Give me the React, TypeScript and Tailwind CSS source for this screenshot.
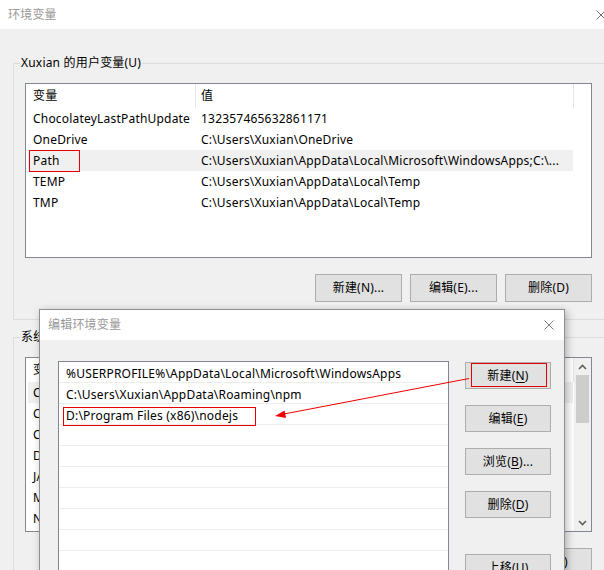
import React from "react";

const userRows = [
  ["ChocolateyLastPathUpdate", "132357465632861171"],
  ["OneDrive", "C:\\Users\\Xuxian\\OneDrive"],
  ["Path", "C:\\Users\\Xuxian\\AppData\\Local\\Microsoft\\WindowsApps;C:\\..."],
  ["TEMP", "C:\\Users\\Xuxian\\AppData\\Local\\Temp"],
  ["TMP", "C:\\Users\\Xuxian\\AppData\\Local\\Temp"],
];

const sysRows = [
  ["ChocolateyInstall", "C:\\ProgramData\\chocolatey"],
  ["ComSpec", "C:\\Windows\\system32\\cmd.exe"],
  ["CLASSPATH", ".;%JAVA_HOME%\\lib"],
  ["DriverData", "C:\\Windows\\System32\\Drivers\\DriverData"],
  ["JAVA_HOME", "C:\\Program Files\\Java\\jdk1.8.0"],
  ["MAVEN_HOME", "D:\\apache-maven"],
  ["NUMBER_OF_PROCESSORS", "8"],
];

const pathRows = [
  "%USERPROFILE%\\AppData\\Local\\Microsoft\\WindowsApps",
  "C:\\Users\\Xuxian\\AppData\\Roaming\\npm",
  "D:\\Program Files (x86)\\nodejs",
  "", "", "", "", "", "", "", "", "", "",
];

function CloseX({ color }: { color: string }) {
  return (
    <svg width="10" height="10" viewBox="0 0 10 10" className="shrink-0">
      <path d="M0.5 0.5 L9.5 9.5 M9.5 0.5 L0.5 9.5" stroke={color} strokeWidth="1" fill="none" />
    </svg>
  );
}

function Btn({ children, className = "" }: { children: React.ReactNode; className?: string }) {
  return (
    <div
      className={
        "flex items-center justify-center border border-[#adadad] bg-[#e1e1e1] whitespace-nowrap " +
        className
      }
    >
      {children}
    </div>
  );
}

function Header() {
  return (
    <div className="flex h-[24px] shrink-0">
      <div className="flex w-[169px] items-center pl-[7px]">变量</div>
      <div className="h-full w-px bg-[#e5e5e5]" />
      <div className="flex w-[377px] items-center pl-[5px]">值</div>
      <div className="h-full w-px bg-[#e5e5e5]" />
    </div>
  );
}

function Row({ name, value, selected }: { name: string; value: string; selected?: boolean }) {
  return (
    <div
      className={
        "ml-[2px] flex h-[21px] w-[545px] shrink-0 items-center whitespace-nowrap " +
        (selected ? "bg-[#f0f0f0]" : "")
      }
    >
      <div className="w-[168px] overflow-hidden pl-[5px]">{name}</div>
      <div className="flex-1 overflow-hidden pl-[5px]">{value}</div>
    </div>
  );
}

function Chevron({ up }: { up?: boolean }) {
  return (
    <svg width="9" height="6" viewBox="0 0 9 6">
      <path
        d={up ? "M1 5 L4.5 1.5 L8 5" : "M1 1 L4.5 4.5 L8 1"}
        stroke="#606060"
        strokeWidth="1.6"
        fill="none"
      />
    </svg>
  );
}

function MainWindow() {
  return (
    <div className="flex w-[620px] flex-col">
      <div className="flex h-[29px] items-center justify-between bg-white pl-[8px] pr-[14px] text-[#999]">
        <span>环境变量</span>
        <CloseX color="#777" />
      </div>

      {/* user variables */}
      <div className="ml-[13px] mt-[34px] w-[594px] border border-[#dcdcdc] pb-[17px] pl-[11px]">
        <div className="-ml-[5px] -mt-[9px] w-fit bg-[#f0f0f0] px-[1px] leading-[16px]">
          Xuxian 的用户变量(U)
        </div>
        <div className="mt-[12px] flex h-[175px] w-[567px] flex-col border border-[#828790] bg-white">
          <Header />
          {userRows.map((r, i) => (
            <Row key={i} name={r[0]} value={r[1]} selected={i === 2} />
          ))}
        </div>
        <div className="mt-[16px] flex w-[567px] justify-end gap-[8px]">
          <Btn className="h-[28px] w-[87px]">新建(N)...</Btn>
          <Btn className="h-[28px] w-[87px]">编辑(E)...</Btn>
          <Btn className="h-[28px] w-[87px]">删除(D)</Btn>
        </div>
      </div>

      {/* system variables */}
      <div className="ml-[13px] mt-[17px] w-[594px] border border-[#dcdcdc] pb-[17px] pl-[11px]">
        <div className="-ml-[5px] -mt-[9px] w-fit bg-[#f0f0f0] px-[1px] leading-[16px]">
          系统变量(S)
        </div>
        <div className="mt-[12px] flex h-[175px] w-[567px] border border-[#828790] bg-white">
          <div className="flex flex-1 flex-col overflow-hidden">
            <Header />
            {sysRows.map((r, i) => (
              <Row key={i} name={r[0]} value={r[1]} selected={i === 0} />
            ))}
          </div>
          <div className="flex w-[17px] flex-col bg-[#f0f0f0]">
            <div className="flex h-[17px] items-center justify-center">
              <Chevron up />
            </div>
            <div className="flex-1">
              <div className="mx-[2px] h-[48px] bg-[#cdcdcd]" />
            </div>
            <div className="flex h-[17px] items-center justify-center">
              <Chevron />
            </div>
          </div>
        </div>
        <div className="mt-[16px] flex w-[567px] justify-end gap-[8px]">
          <Btn className="h-[28px] w-[87px]">新建(W)...</Btn>
          <Btn className="h-[28px] w-[87px]">编辑(I)...</Btn>
          <Btn className="h-[28px] w-[87px]">删除(L)</Btn>
        </div>
      </div>
    </div>
  );
}

function EditDialog() {
  return (
    <div className="absolute left-[39px] top-[309px] flex h-[290px] w-[526px] flex-col border border-[#8f8f8f] bg-[#f0f0f0] shadow-[2px_2px_8px_rgba(0,0,0,0.28)]">
      <div className="flex h-[30px] shrink-0 items-center justify-between bg-white pl-[8px] pr-[10px] text-[#999]">
        <span>编辑环境变量</span>
        <CloseX color="#808080" />
      </div>
      <div className="flex gap-[16px] pl-[18px] pt-[21px]">
        <div className="flex h-[260px] w-[391px] flex-col overflow-hidden border border-[#828790] bg-white">
          {pathRows.map((p, i) => (
            <div
              key={i}
              className="flex h-[21px] shrink-0 items-start whitespace-nowrap border-b border-[#ededed] pl-[7px] pt-[4px]"
            >
              {p}
            </div>
          ))}
        </div>
        <div className="flex flex-col pt-[1px]">
          <Btn className="h-[27px] w-[86px]">
            新建(<span className="underline underline-offset-2">N</span>)
          </Btn>
          <Btn className="mt-[16px] h-[27px] w-[86px]">
            编辑(<span className="underline underline-offset-2">E</span>)
          </Btn>
          <Btn className="mt-[16px] h-[27px] w-[86px]">
            浏览(<span className="underline underline-offset-2">B</span>)...
          </Btn>
          <Btn className="mt-[16px] h-[27px] w-[86px]">
            删除(<span className="underline underline-offset-2">D</span>)
          </Btn>
          <Btn className="mt-[36px] h-[27px] w-[86px]">
            上移(<span className="underline underline-offset-2">U</span>)
          </Btn>
        </div>
      </div>
    </div>
  );
}

function Annotations() {
  return (
    <>
      <div className="pointer-events-none absolute left-[29px] top-[150px] h-[22px] w-[51px] border border-[#e60000]" />
      <div className="pointer-events-none absolute left-[63px] top-[407px] h-[19px] w-[193px] border border-[#e60000]" />
      <div className="pointer-events-none absolute left-[471px] top-[363px] h-[24px] w-[76px] border border-[#e60000]" />
      <svg
        className="pointer-events-none absolute left-0 top-0"
        width="604"
        height="570"
        viewBox="0 0 604 570"
      >
        <line x1="469" y1="378.5" x2="284" y2="414" stroke="#f00000" strokeWidth="1" />
        <polygon points="275,416 286,418 284.6,410.5" fill="#f00000" />
      </svg>
    </>
  );
}

export default function App() {
  return (
    <div className="relative h-[570px] w-[604px] overflow-hidden bg-[#f0f0f0] font-['Noto_Sans','Noto_Sans_CJK_SC',sans-serif] text-[12px] leading-[16px] tracking-[0.2px] text-black">
      <MainWindow />
      <EditDialog />
      <Annotations />
    </div>
  );
}
